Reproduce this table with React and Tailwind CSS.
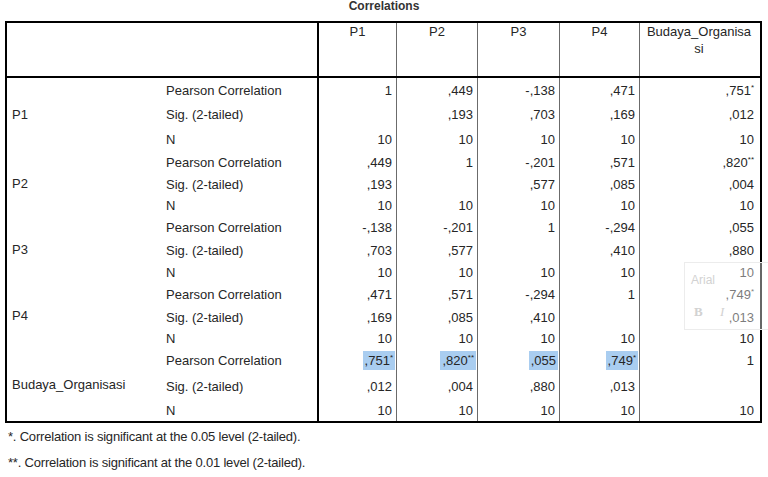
import React from "react";

const COLS = "grid-cols-[155px_157px_78px_81px_82px_80px_118px]";
const ROWS =
  "grid-rows-[24px_25px_24px_22px_22px_21px_23px_23px_21px_23px_22px_20px_24px_28px_21px]";

const STATS = ["Pearson Correlation", "Sig. (2-tailed)", "N"];

const groups = [
  {
    name: "P1",
    rows: [
      ["1", ",449", "-,138", ",471", ",751|*"],
      ["", ",193", ",703", ",169", ",012"],
      ["10", "10", "10", "10", "10"],
    ],
  },
  {
    name: "P2",
    rows: [
      [",449", "1", "-,201", ",571", ",820|**"],
      [",193", "", ",577", ",085", ",004"],
      ["10", "10", "10", "10", "10"],
    ],
  },
  {
    name: "P3",
    rows: [
      ["-,138", "-,201", "1", "-,294", ",055"],
      [",703", ",577", "", ",410", ",880"],
      ["10", "10", "10", "10", "10"],
    ],
  },
  {
    name: "P4",
    rows: [
      [",471", ",571", "-,294", "1", ",749|*"],
      [",169", ",085", ",410", "", ",013"],
      ["10", "10", "10", "10", "10"],
    ],
  },
  {
    name: "Budaya_Organisasi",
    rows: [
      ["#,751|*", "#,820|**", "#,055", "#,749|*", "1"],
      [",012", ",004", ",880", ",013", ""],
      ["10", "10", "10", "10", "10"],
    ],
  },
];

function Value({ raw }) {
  const marked = raw.startsWith("#");
  const [num, star] = (marked ? raw.slice(1) : raw).split("|");
  const body = (
    <>
      {num}
      {star && <span className="text-[8px] align-super leading-none">{star}</span>}
    </>
  );
  if (marked) {
    return <span className="bg-[#a9cdf0] px-[2px] py-[2px]">{body}</span>;
  }
  return <span>{body}</span>;
}

function ValueCell({ raw, last }) {
  const marked = raw.startsWith("#");
  return (
    <div
      className={`flex items-center justify-end ${marked ? "pr-[1px]" : "pr-[4px]"} ${
        last ? "" : "border-r border-[#6b6b6b]"
      }`}
    >
      {raw && <Value raw={raw} />}
    </div>
  );
}

export default function App() {
  return (
    <div
      className="relative w-[768px] h-[477px] bg-white overflow-hidden text-[13px] leading-[15px] text-[#262626]"
      style={{ fontFamily: '"Liberation Sans", Arial, sans-serif' }}
    >
      <div className="h-[21px] text-center font-bold text-[12px] leading-[13px] text-[#333]">
        Correlations
      </div>

      <div className="ml-[5px] w-[757px] border-2 border-black">
        {/* header */}
        <div className={`grid ${COLS} h-[55px] border-b-2 border-black`}>
          <div />
          <div className="border-r-2 border-black" />
          {["P1", "P2", "P3", "P4"].map((p) => (
            <div key={p} className="border-r border-[#6b6b6b] text-center leading-[17px]">
              {p}
            </div>
          ))}
          <div className="text-center leading-[17px]">
            Budaya_Organisa
            <br />
            si
          </div>
        </div>

        {/* body */}
        <div className={`grid ${COLS} ${ROWS}`}>
          {groups.map((g) => (
            <React.Fragment key={g.name}>
              <div className="row-span-3 flex items-center pl-[5px]">{g.name}</div>
              {g.rows.map((vals, i) => (
                <React.Fragment key={i}>
                  <div className="flex items-center pl-[4px] border-r-2 border-black">
                    {STATS[i]}
                  </div>
                  {vals.map((v, j) => (
                    <ValueCell key={j} raw={v} last={j === 4} />
                  ))}
                </React.Fragment>
              ))}
            </React.Fragment>
          ))}
        </div>
      </div>

      <div className="pl-[8px] pt-[4px] tracking-[-0.2px]">
        <div className="h-[26px] leading-[20px]">
          *. Correlation is significant at the 0.05 level (2-tailed).
        </div>
        <div className="leading-[20px]">
          **. Correlation is significant at the 0.01 level (2-tailed).
        </div>
      </div>

      {/* faint mini toolbar */}
      <div className="absolute left-[684px] top-[262px] w-[90px] h-[68px] border border-[#ececec] bg-white/40 text-[#d2d2d2]">
        <div className="pl-[6px] pt-[10px] text-[12px] leading-[14px]">Arial</div>
        <div
          className="pl-[9px] pt-[18px] text-[13px] leading-[14px] font-bold"
          style={{ fontFamily: '"Liberation Serif", serif' }}
        >
          B <span className="italic font-normal ml-[14px]">I</span>
        </div>
      </div>
    </div>
  );
}
